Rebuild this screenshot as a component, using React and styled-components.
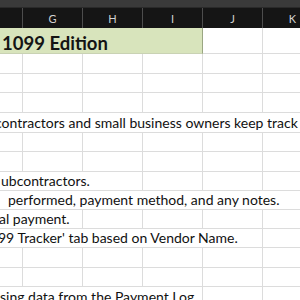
import React from "react";
import styled, { createGlobalStyle } from "styled-components";

const Global = createGlobalStyle`
  html, body { margin: 0; padding: 0; background: #ffffff; }
  * { box-sizing: border-box; }
`;

const COLS = "23px repeat(5, 60px)";

const Sheet = styled.div`
  width: 300px;
  height: 300px;
  overflow: hidden;
  background: #ffffff;
  font-family: Lato, "Open Sans", sans-serif;
  display: flex;
  flex-direction: column;
`;

const TopStrip = styled.div`
  height: 8px;
  flex: none;
  background: #3a3a3a;
  border-bottom: 1px solid #2a2a2a;
`;

const HeaderRow = styled.div`
  display: grid;
  grid-template-columns: ${COLS};
  height: 20px;
  flex: none;
  background: #151515;
`;

const ColHead = styled.div`
  border-right: 1px solid #4d4d4d;
  color: #d2d2d2;
  font-size: 11px;
  display: flex;
  align-items: center;
  justify-content: center;
  padding-top: 1px;
`;

const Row = styled.div`
  display: grid;
  grid-template-columns: ${COLS};
  height: ${(p) => p.$h}px;
  flex: none;
`;

const Cell = styled.div`
  border-right: 1px solid #dcdcdc;
  border-bottom: 1px solid #dcdcdc;
  grid-column: span ${(p) => p.$span || 1};
`;

const TitleCell = styled.div`
  grid-column: span 4;
  background: #d8e4bc;
  border-right: 1px solid #9aa682;
  border-bottom: 1px solid #c9d2b4;
  display: flex;
  align-items: flex-end;
  padding-bottom: 1px;
  font-weight: 700;
  font-size: 18.5px;
  line-height: 18px;
  color: #141414;
  white-space: nowrap;
`;

const TextCell = styled(Cell)`
  display: flex;
  align-items: flex-end;
  white-space: nowrap;
  font-size: 14px;
  color: #111111;
  line-height: 16px;
  padding-bottom: 1px;
`;

const Text = styled.span`
  margin-left: ${(p) => p.$shift}px;
`;

const heads = ["", "G", "H", "I", "J", "K"];

const rows = [
  { h: 20 },
  { h: 19 },
  { h: 20 },
  { h: 20, text: "contractors and small business owners keep track of payments", span: 6, shift: -5 },
  { h: 19 },
  { h: 20 },
  { h: 19, text: "ubcontractors.", span: 3, shift: 1 },
  { h: 19, text: "performed, payment method, and any notes.", span: 6, shift: 8 },
  { h: 19, text: "al payment.", span: 2, shift: -1 },
  { h: 19, text: "99 Tracker' tab based on Vendor Name.", span: 5, shift: -2 },
  { h: 20 },
  { h: 19 },
  { h: 20, text: "sing data from the Payment Log", span: 4, shift: 0 },
];

function BodyRow({ row }) {
  const span = row.text ? row.span : 0;
  const rest = 6 - span;
  return (
    <Row $h={row.h}>
      {row.text && (
        <TextCell $span={span}>
          <Text $shift={row.shift}>{row.text}</Text>
        </TextCell>
      )}
      {Array.from({ length: rest }).map((_, i) => (
        <Cell key={i} />
      ))}
    </Row>
  );
}

export default function App() {
  return (
    <>
      <Global />
      <Sheet>
        <TopStrip />
        <HeaderRow>
          {heads.map((h, i) => (
            <ColHead key={i}>{h}</ColHead>
          ))}
        </HeaderRow>
        <Row $h={26}>
          <TitleCell>
            <Text $shift={2}>1099 Edition</Text>
          </TitleCell>
          <Cell />
          <Cell />
        </Row>
        {rows.map((r, i) => (
          <BodyRow key={i} row={r} />
        ))}
      </Sheet>
    </>
  );
}
